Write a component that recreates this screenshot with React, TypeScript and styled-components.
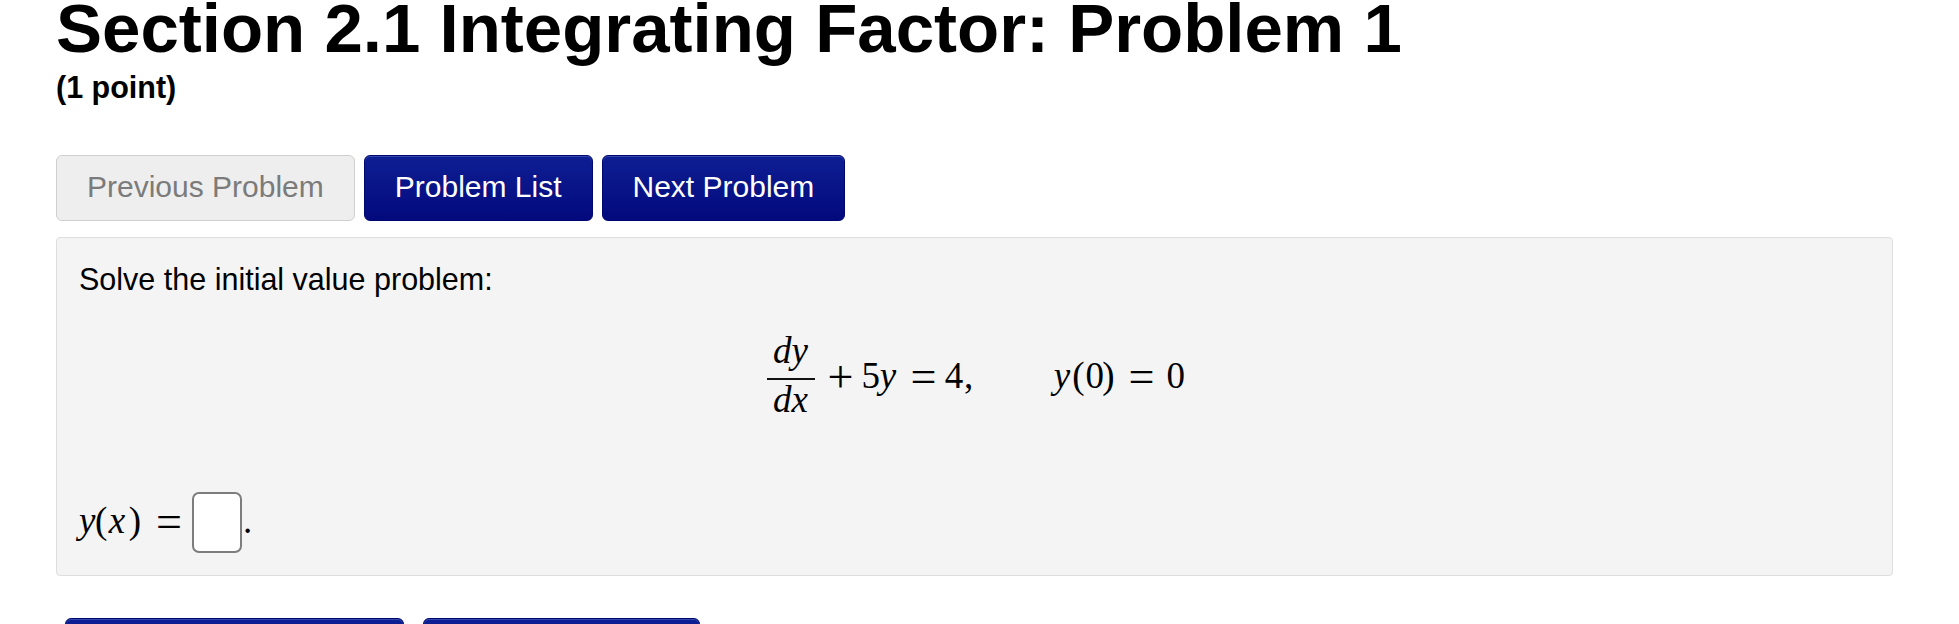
import styled, { createGlobalStyle } from "styled-components";

const GlobalStyle = createGlobalStyle`
  html, body {
    margin: 0;
    padding: 0;
    overflow: hidden;
    background: #ffffff;
  }
  body {
    font-family: "Liberation Sans", Arial, Helvetica, sans-serif;
    color: #000000;
  }
`;

const Page = styled.div`
  padding: 0 66px 0 56px;
`;

const Title = styled.h1`
  margin: 0;
  font-size: 69px;
  line-height: 58px;
  font-weight: 700;
  white-space: nowrap;
`;

const Points = styled.div`
  margin-top: 12px;
  font-size: 30.5px;
  line-height: 34px;
  font-weight: 700;
`;

const ButtonRow = styled.div<{ $top: number; $indent?: number; $gap: number }>`
  display: flex;
  gap: ${(p) => p.$gap}px;
  margin-top: ${(p) => p.$top}px;
  padding-left: ${(p) => p.$indent ?? 0}px;
`;

const NavButton = styled.button<{ $disabled?: boolean }>`
  font-family: "Liberation Sans", Arial, Helvetica, sans-serif;
  font-size: 30px;
  line-height: 34px;
  padding: 14px 30px 16px;
  border-radius: 6px;
  white-space: nowrap;
  cursor: ${(p) => (p.$disabled ? "default" : "pointer")};
  color: ${(p) => (p.$disabled ? "#7b7b7b" : "#ffffff")};
  border: 1px solid ${(p) => (p.$disabled ? "#cfcfcf" : "#00086e")};
  background: ${(p) =>
    p.$disabled ? "#eeeeee" : "linear-gradient(to bottom, #0e1f93, #02097d)"};
  box-shadow: ${(p) =>
    p.$disabled ? "none" : "inset 0 1px 0 rgba(120, 150, 230, 0.35)"};
`;

const ProblemBox = styled.div`
  margin-top: 16px;
  padding: 20px 22px 22px;
  background: #f4f4f4;
  border: 1px solid #dedede;
  border-radius: 4px;
`;

const Prompt = styled.p`
  margin: 0;
  font-size: 30.5px;
  line-height: 43px;
`;

const MathLine = styled.div<{ $top: number; $center?: boolean }>`
  margin-top: ${(p) => p.$top}px;
  text-align: ${(p) => (p.$center ? "center" : "left")};
  font-family: "Liberation Serif", "Times New Roman", serif;
  font-size: 37px;
  line-height: 35px;
  white-space: nowrap;
  color: #000000;
`;

const Var = styled.span<{ $w: number; $ml?: number }>`
  display: inline-block;
  width: ${(p) => p.$w}px;
  margin-left: ${(p) => p.$ml ?? 0}px;
  text-align: center;
  font-style: italic;
`;

const Digit = styled.span<{ $w: number; $ml?: number }>`
  display: inline-block;
  width: ${(p) => p.$w}px;
  margin-left: ${(p) => p.$ml ?? 0}px;
  text-align: center;
`;

const Op = styled.span<{ $w: number; $ml?: number }>`
  display: inline-block;
  width: ${(p) => p.$w}px;
  margin-left: ${(p) => p.$ml ?? 0}px;
  text-align: center;
  font-size: 46px;
  vertical-align: -4px;
`;

const Fraction = styled.span<{ $w: number }>`
  display: inline-block;
  width: ${(p) => p.$w}px;
  text-align: center;
  vertical-align: -24px;
`;

const FracPart = styled.span`
  display: block;
  font-style: italic;
`;

const FracBar = styled.span`
  display: block;
  height: 2px;
  margin: 10px 0 2px;
  background: #111111;
`;

const AnswerBlank = styled.span`
  display: inline-block;
  box-sizing: border-box;
  width: 50px;
  height: 61px;
  margin-left: 11px;
  vertical-align: -20px;
  background: #ffffff;
  border: 2px solid #7d7d7d;
  border-radius: 7px;
`;

export default function App() {
  return (
    <Page>
      <GlobalStyle />
      <Title>Section 2.1 Integrating Factor: Problem 1</Title>
      <Points>(1 point)</Points>

      <ButtonRow $top={51} $gap={9}>
        <NavButton $disabled disabled>
          Previous Problem
        </NavButton>
        <NavButton>Problem List</NavButton>
        <NavButton>Next Problem</NavButton>
      </ButtonRow>

      <ProblemBox>
        <Prompt>Solve the initial value problem:</Prompt>

        <MathLine $top={32} $center>
          <Fraction $w={48}>
            <FracPart>dy</FracPart>
            <FracBar />
            <FracPart>dx</FracPart>
          </Fraction>
          <Op $w={24} $ml={13}>+</Op>
          <Digit $w={16} $ml={10}>5</Digit>
          <Var $w={21}>y</Var>
          <Op $w={24} $ml={12}>=</Op>
          <Digit $w={19} $ml={10}>4</Digit>
          <Digit $w={10}>,</Digit>
          <Var $w={19} $ml={79}>y</Var>
          <Digit $w={14}>(</Digit>
          <Digit $w={16}>0</Digit>
          <Digit $w={14}>)</Digit>
          <Op $w={24} $ml={13}>=</Op>
          <Digit $w={16} $ml={14}>0</Digit>
        </MathLine>

        <MathLine $top={75}>
          <Var $w={16}>y</Var>
          <Digit $w={11}>(</Digit>
          <Var $w={22}>x</Var>
          <Digit $w={14}>)</Digit>
          <Op $w={25} $ml={14}>=</Op>
          <AnswerBlank />
          <Digit $w={7} $ml={1}>.</Digit>
        </MathLine>
      </ProblemBox>

      <ButtonRow $top={42} $indent={9} $gap={19}>
        <NavButton>Preview My Answers</NavButton>
        <NavButton>Submit Answers</NavButton>
      </ButtonRow>
    </Page>
  );
}
